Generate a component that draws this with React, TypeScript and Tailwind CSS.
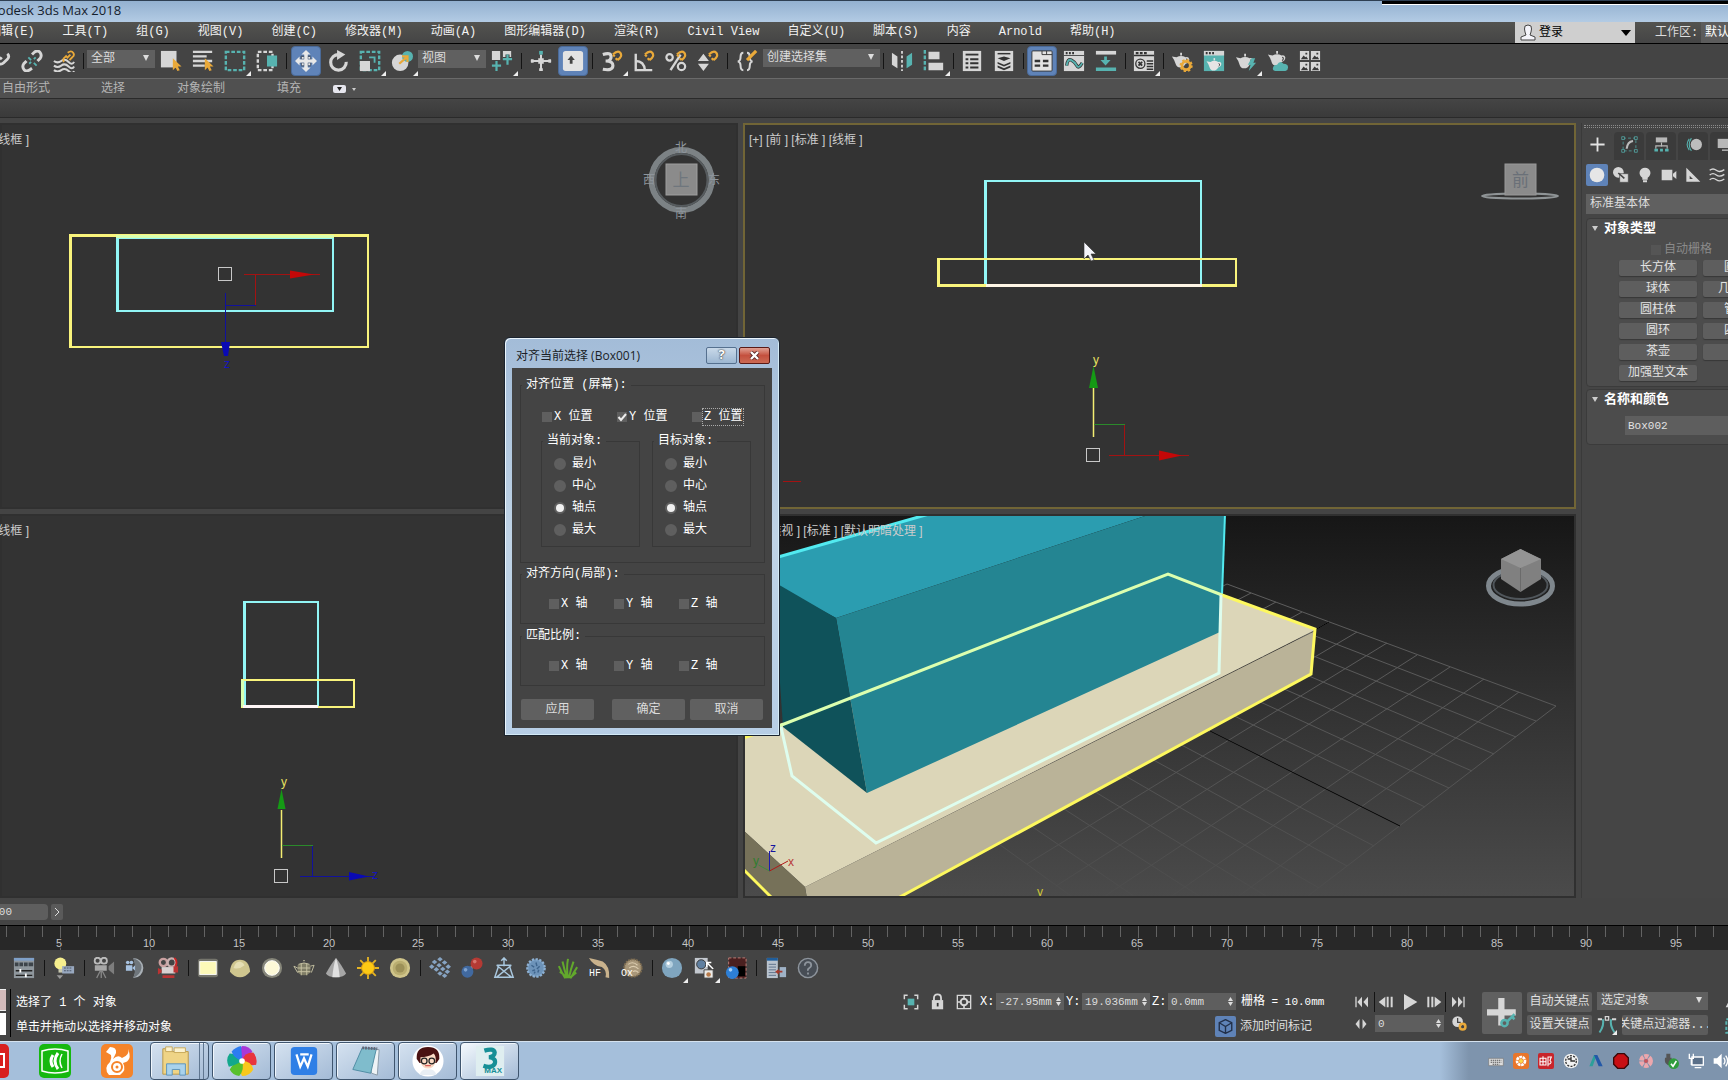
import type { ReactNode } from 'react';

const L = '#d6d6d6';
const T = '#57b3b0';
const A = '#e9a93a';

/* ---------- small shared pieces ---------- */

function Glyph({ children, size = 24 }: { children: ReactNode; size?: number }) {
  return (
    <svg width={size} height={size} viewBox="0 0 24 24" fill="none" aria-hidden="true" className="shrink-0">
      {children}
    </svg>
  );
}

function Sep({ tone = 'w-[7px]' }: { tone?: string }) {
  return (
    <div className={`flex h-full shrink-0 items-center justify-center ${tone}`}>
      <div className="h-4 w-px bg-[#141414]" />
    </div>
  );
}

interface ToolProps {
  label: string;
  active?: boolean;
  flyout?: boolean;
  children: ReactNode;
}

function Tool({ label, active, flyout, children }: ToolProps) {
  return (
    <button type="button" aria-label={label} className="relative flex h-[30px] w-8 shrink-0 items-center justify-center">
      <span
        className={`flex h-[30px] w-[30px] items-center justify-center rounded-sm ${
          active ? 'border border-[#4a6a98] bg-[#5f83b8]' : ''
        }`}
      >
        {children}
      </span>
      {flyout && (
        <svg width="5" height="5" viewBox="0 0 5 5" className="absolute right-0 bottom-0" aria-hidden="true">
          <path d="M5 0V5H0Z" fill="#eee" />
        </svg>
      )}
    </button>
  );
}

function Dropdown({ label, value, className }: { label: string; value: string; className: string }) {
  return (
    <div className={`relative shrink-0 ${className}`}>
      <select
        aria-label={label}
        className="h-full w-full appearance-none rounded-none bg-[#606060] pl-1 text-xs text-[#dcdcdc] outline-none"
      >
        <option>{value}</option>
      </select>
      <svg width="6" height="6" viewBox="0 0 6 6" className="pointer-events-none absolute top-1/2 right-1.5 -mt-1" aria-hidden="true">
        <path d="M0 0H6L3 6Z" fill="#ddd" />
      </svg>
    </div>
  );
}

/* ---------- drawings reused by several icons ---------- */

const Magnet = () => (
  <path d="M13 5q5-5 8-2q3 4-3 8M13 5l2 2M18 11l-2-2" stroke={A} strokeWidth="2.4" />
);

const Pot = ({ fill = L }: { fill?: string }) => (
  <>
    <path d="M1 5l5 1q5-3 10 0q3-1 4 2q0 4-4 5q-2 4-6 4T5 13Q4 9 1 5Z" fill={fill} />
    <path d="M10 1h2v3h-2z" fill={fill} />
    <path d="M16.500 8q2 0 1 2.500l-1 1" stroke="#444" strokeWidth="1.200" />
  </>
);

const Pointer = () => <path d="M14 9v13l3-3 2 4 2.500-1-2-4h4Z" fill={A} />;

const icons: Record<string, ReactNode> = {
  link: (
    <path d="M4 20q-3-3 0-6l4-4q3-3 6 0M20 4q3 3 0 6l-4 4q-3 3-6 0" stroke={L} strokeWidth="3" />
  ),
  unlink: (
    <>
      <path d="M12 20l-3 2q-4 2-6-1t0-6l3-3M12 5l3-3q4-2 6 1t0 6l-3 3" stroke={L} strokeWidth="3.200" />
      <path d="M8 8l3 3M14 14l3 3M9 15l2-2M14 10l2-2" stroke={T} strokeWidth="2" />
    </>
  ),
  bind: (
    <>
      <path d="M1 12q4 3 8 0t8 1 6 0M1 17q4 3 8 0t8 1 6 0M1 22q4 3 8 0t8 1 6 0" stroke={L} strokeWidth="2.200" />
      <path d="M12 13q-2-3 1-5l2-2M16 3q4-3 6 0t-1 5l-3 3M15 9l4-4" stroke={A} strokeWidth="2" />
    </>
  ),
  select: (
    <>
      <path d="M1 1h17v18H1z" fill={L} />
      <Pointer />
    </>
  ),
  byName: (
    <>
      <path d="M1 2h21M1 7h15M1 12h21M1 17h13" stroke={L} strokeWidth="2.600" />
      <Pointer />
    </>
  ),
  region: <rect x="2" y="2" width="20" height="20" stroke={T} strokeWidth="2.600" strokeDasharray="4 2" />,
  window: (
    <>
      <rect x="2" y="2" width="16" height="20" stroke={L} strokeWidth="2.600" strokeDasharray="4 2" />
      <path d="M12 6h11v12H12z" fill={T} />
    </>
  ),
  move: (
    <>
      <path d="M12 0l5 5h-3v5h5V7l5 5-5 5v-3h-5v5h3l-5 5-5-5h3v-5H5v3l-5-5 5-5v3h5V5H7Z" fill="#e8e8e8" />
      <path d="M7 6h3v4H6V7zM14 6h3v1l1 3h-4zM6 14h4v4H7zM14 14h4l-1 4h-3z" fill="#4b5a70" />
      <path d="M7.500 7.500h2v2h-2zM14.500 7.500h2v2h-2zM7.500 14.500h2v2h-2zM14.500 14.500h2v2h-2z" fill="#e8e8e8" />
    </>
  ),
  rotate: (
    <>
      <path d="M13 5A8.500 8.500 0 1 0 21 13" stroke={L} strokeWidth="3.400" />
      <path d="M11 0l9 5-9 6Z" fill={L} />
    </>
  ),
  scale: (
    <>
      <rect x="2" y="2" width="20" height="20" stroke={T} strokeWidth="2.600" strokeDasharray="4 2" />
      <path d="M11 8h6v6" stroke={T} strokeWidth="2" />
      <path d="M1 12h11v11H1z" fill={L} />
    </>
  ),
  place: (
    <>
      <circle cx="10" cy="14" r="9" fill={L} />
      <circle cx="18" cy="7" r="6" fill={T} />
      <path d="M9 15L17 8M12 7h6v6" stroke={A} strokeWidth="2.400" />
    </>
  ),
  pivot: (
    <>
      <path d="M1 1h9v10H1zM13 1h9v10h-9z" fill={L} />
      <path d="M6 11v12M1 17h10M18 5v11M13 10h10" stroke="#444" strokeWidth="4.500" />
      <path d="M6 12v11M1 17h10M18 5v11M13 10h10" stroke={T} strokeWidth="2.400" />
    </>
  ),
  manip: (
    <>
      <path d="M12 5v18M1 12h22" stroke={L} strokeWidth="2.200" />
      <path d="M10 1h4v4h-4z" fill={T} />
      <path d="M9 9h6v6H9zM1 10h3v4H1zM20 10h3v4h-3zM10 20h4v3h-4z" fill={L} />
    </>
  ),
  keyboard: (
    <>
      <rect x="1" y="1" width="22" height="22" rx="3" fill="#e3e3e3" />
      <path d="M10 6l-4 5h2.500v4h3v-4H14Z" fill="#444" />
    </>
  ),
  snap3: (
    <>
      <path d="M2 5q9-3 9 2.500Q11 12 5 12q8 0 8 5 0 6-11 4" stroke={L} strokeWidth="3.400" />
      <Magnet />
    </>
  ),
  snapAngle: (
    <>
      <path d="M3 4v18h18M3 12q9 0 10 10" stroke={L} strokeWidth="2.600" />
      <Magnet />
    </>
  ),
  snapPercent: (
    <>
      <circle cx="5" cy="8" r="3.500" stroke={L} strokeWidth="2.400" />
      <circle cx="18" cy="18" r="4" stroke={L} strokeWidth="2.400" />
      <path d="M17 5L6 22" stroke={L} strokeWidth="2.600" />
      <Magnet />
    </>
  ),
  snapSpinner: (
    <>
      <path d="M1 12l6-8 6 8zM1 15h12l-6 8z" fill={L} />
      <Magnet />
    </>
  ),
  braces: (
    <>
      <path d="M8 3Q5 3 5 7q0 5-3 5.500 3 .5 3 5Q5 22 8 22M12 3q3 0 3 4 0 5 3 5.500-3 .5-3 5 0 4.500-3 4.500" stroke={L} strokeWidth="2.200" />
      <path d="M12 11L22 1" stroke={A} strokeWidth="3.500" />
    </>
  ),
  mirror: (
    <>
      <path d="M1 3l6 4v13l-6-4z" fill={L} />
      <path d="M12 1v22" stroke={L} strokeWidth="2" strokeDasharray="3 2" />
      <path d="M23 3l-6 4v13l6-4z" fill={T} />
    </>
  ),
  align: (
    <>
      <path d="M2 0v24" stroke={T} strokeWidth="2.600" strokeDasharray="4 2" />
      <path d="M6 2h12v8H6zM6 14h16v8H6z" fill={L} />
    </>
  ),
  explorer: (
    <>
      <path d="M2 1h20v22H2z" fill={L} />
      <path d="M5 5h14" stroke="#333" strokeWidth="2" />
      <path d="M5 10h3M10 10h9M5 14.500h3M10 14.500h9M5 19h3M10 19h9" stroke="#333" strokeWidth="2.200" />
    </>
  ),
  layers: (
    <>
      <path d="M2 1h20v22H2z" fill={L} />
      <path d="M5 4h14" stroke="#333" strokeWidth="1.600" />
      <path d="M5 9l7-2 7 2-7 3zM5 13l7 3 7-3v2l-7 3-7-3zM5 17l7 3 7-3v2l-7 3-7-3z" fill="#333" />
    </>
  ),
  ribbon: (
    <>
      <rect x="1" y="1" width="22" height="22" rx="1" fill="#e3e3e3" stroke="#333" />
      <path d="M12 1v4h11M17 1v4" stroke="#333" />
      <path d="M4 12h6M13 12h6M4 17h6M13 17h6" stroke="#333" strokeWidth="2.600" />
    </>
  ),
  curve: (
    <>
      <path d="M1 1h22v22H1z" fill={L} />
      <path d="M3 3.500h9" stroke="#333" strokeWidth="2.500" strokeDasharray="2 1.500" />
      <path d="M1 6h22" stroke="#444" />
      <path d="M4 17q1-8 5-6t6 6 6-3" stroke="#333" strokeWidth="3.600" />
      <path d="M4 17q1-8 5-6t6 6 6-3" stroke={T} strokeWidth="2" />
    </>
  ),
  schematic: (
    <>
      <path d="M1 1h22v4H1z" fill={L} />
      <path d="M1 19h22v4H1zM10 7h3v4h4l-5.500 6L6 11h4z" fill={T} />
    </>
  ),
  material: (
    <>
      <path d="M1 1h22v22H1z" fill={L} />
      <path d="M3 3.500h12" stroke="#333" strokeWidth="2.500" strokeDasharray="3 1.500" />
      <path d="M1 6h22M15 12h7M15 15h7M15 18h7M15 21h7" stroke="#333" strokeWidth="1.400" />
      <circle cx="8" cy="15" r="5" stroke="#333" strokeWidth="1.400" />
      <path d="M6 13l4 4M10 13l-4 4" stroke="#333" strokeWidth="2" />
    </>
  ),
  renderSetup: (
    <>
      <g transform="translate(0 2)"><Pot /></g>
      <circle cx="16.500" cy="17" r="4.500" stroke={A} strokeWidth="3" />
      <circle cx="16.500" cy="17" r="6.300" stroke={A} strokeWidth="1.800" strokeDasharray="2.600 2.300" />
    </>
  ),
  renderFrame: (
    <>
      <path d="M1 1h22v22H1z" fill={T} />
      <path d="M1 1h22v5H1z" fill={L} />
      <path d="M3 3.500h9" stroke="#333" strokeWidth="2.500" strokeDasharray="2 1.500" />
      <g transform="translate(3 8) scale(.85)"><Pot fill="#e5e5e5" /></g>
    </>
  ),
  render: (
    <>
      <g transform="translate(0 3)"><Pot /></g>
      <path d="M18 9l4 0-2 5h3l-8 9 2-7h-3z" fill={T} />
    </>
  ),
  cloud: (
    <>
      <Pot />
      <path d="M9 23q-4-1-2-5 1-2 4-2 3-5 7-1 5 0 5 4 0 3-3 4z" fill={T} />
    </>
  ),
  gallery: (
    <>
      <path d="M1 1h10v10H1zM13 1h10v10H13zM1 13h10v10H1zM13 13h10v10H13z" fill={L} />
      <path d="M2 10l3-4 2 2 1-1 2 3zM14 10l3-4 2 2 1-1 2 3zM2 22l3-4 2 2 1-1 2 3zM14 22l3-4 2 2 1-1 2 3zM7 3h2v2H7zM19 3h2v2h-2zM7 15h2v2H7zM19 15h2v2h-2z" fill="#3a3a3a" />
    </>
  ),

  /* lower bar */
  sliders: (
    <>
      <path d="M1 1h22v22H1z" fill="#8f979d" />
      <path d="M1 1h22v3H1z" fill="#7fa0c8" />
      <path d="M2 6h4v4H2zM7 6h4v4H7zM12 6h4v4h-4zM17 6h5v4h-5z" fill="#3d444a" />
      <path d="M3 15h18M3 20h18" stroke="#222" strokeWidth="1.500" />
      <path d="M7 13h2v4H7zM13 18h2v4h-2z" fill="#fff" />
    </>
  ),
  bulb: (
    <>
      <circle cx="8" cy="7" r="6.500" fill="#f6ee8e" />
      <path d="M6 13h5v4H6z" fill="#c9c9b0" />
      <path d="M10 10h13v8H10z" fill="#98a8bf" />
      <path d="M12 12h9M12 15h9" stroke="#4b5668" strokeWidth="1.300" strokeDasharray="2 1" />
      <path d="M4 20h7l-3.500 4z" fill="#9a9a9a" />
    </>
  ),
  camera: (
    <>
      <circle cx="5" cy="4" r="3.200" stroke="#bbb" strokeWidth="2" />
      <circle cx="12" cy="4" r="3.200" stroke="#bbb" strokeWidth="2" />
      <path d="M2 9h13v6H2z" fill="#a7a7a7" />
      <path d="M17 10l6-5v14l-6-5z" fill="#7d7d7d" />
      <path d="M8 15l-4 8M9 15v8M10 15l4 8" stroke="#888" strokeWidth="1.400" />
    </>
  ),
  cameraDome: (
    <>
      <path d="M9 1a11 11 0 0 1 0 22q5-10 0-22z" fill="#a9b0b6" />
      <path d="M9 1q10 4 9 11T9 23q4-11 0-22z" fill="#6f767c" />
      <path d="M1 9h7v6H1zM8 12l3-3v6z" fill="#a8c3e2" />
      <circle cx="3" cy="6" r="2" fill="#a8c3e2" />
      <circle cx="7" cy="6" r="2" fill="#a8c3e2" />
    </>
  ),
  cameraRed: (
    <>
      <circle cx="7" cy="6" r="4" stroke="#c9a0a0" strokeWidth="2.600" />
      <circle cx="16" cy="6" r="4.500" stroke="#c9b0b0" strokeWidth="2.600" />
      <path d="M19 1q4 4 1 9" stroke="#c22" strokeWidth="2" />
      <path d="M5 11h15v7H5z" fill="#d8d0d0" />
      <path d="M1 12l4 2v3l-4 2zM18 10h5v7h-5zM6 20h13v3H6z" fill="#b33" />
    </>
  ),
  areaLight: (
    <>
      <rect x="1" y="2" width="22" height="20" rx="3" fill="#75756c" />
      <rect x="3" y="5" width="18" height="14" fill="#fdf9b8" stroke="#fff" />
    </>
  ),
  domeLight: (
    <>
      <path d="M1 16Q2 3 12 3t11 13q-5 6-11 6T1 16z" fill="#cfc68f" />
      <path d="M5 12q2-7 7-7 4 1 5 4-6 5-12 3z" fill="#e5dfb4" />
    </>
  ),
  sphereLight: (
    <>
      <circle cx="12" cy="12" r="11" fill="#86867a" />
      <circle cx="12" cy="12" r="8" fill="#fdf9d8" stroke="#fff" />
    </>
  ),
  meshLight: (
    <>
      <path d="M5 9q7-5 14 0v8q-3 3-7 3t-7-3z" fill="#7f7d66" />
      <path d="M5 12l-4-2 4 7M19 10l4-1-3 8M6 8q6-3 12 0M5 12h14M5 16h14M9 7v13M15 7v13M11 4h2" stroke="#c9c5a5" />
    </>
  ),
  iesLight: (
    <>
      <path d="M12 1q5 6 11 17-2 4-11 4T1 18Q7 7 12 1z" fill="#a5a5a5" />
      <path d="M12 1q3 8 4 21H8Q9 9 12 1z" fill="#e0e0e0" />
    </>
  ),
  sun: (
    <>
      <path d="M12 0v24M0 12h24M3.500 3.500l17 17M20.500 3.500l-17 17" stroke="#e6b524" strokeWidth="2" />
      <circle cx="12" cy="12" r="7" fill="#fdc914" stroke="#d99a10" />
    </>
  ),
  ambient: (
    <>
      <circle cx="12" cy="12" r="11" fill="#cfc48a" />
      <circle cx="12" cy="12" r="8" fill="#b9ad70" />
      <circle cx="12" cy="12" r="5" fill="#9c9058" />
    </>
  ),
  instancer: (
    <g fill="#86a3c2">
      <path d="M12 0l3 2.500-3 2.500-3-2.500zM6 3l3 2.500-3 2.500-3-2.500zM17 3.500l3 2.500-3 2.500-3-2.500zM11 6.500l3 2.500-3 2.500-3-2.500zM3 8l3 2.500-3 2.500-3-2.500zM21 8l3 2.500-3 2.500-3-2.500zM15 10.500l3 2.500-3 2.500-3-2.500zM8 11l3 2.500-3 2.500-3-2.500zM20 13.500l3 2.500-3 2.500-3-2.500zM12 15.500l3 2.500-3 2.500-3-2.500zM17 18l3 2.500-3 2.500-3-2.500z" />
    </g>
  ),
  molecule: (
    <>
      <path d="M8 15l9-9" stroke="#999" strokeWidth="3" />
      <circle cx="17" cy="7" r="6.500" fill="#b43a34" />
      <circle cx="7" cy="16" r="6.500" fill="#41699f" />
      <circle cx="15" cy="5" r="2" fill="#d6766e" />
      <circle cx="5" cy="14" r="2" fill="#7fa3cf" />
    </>
  ),
  tower: (
    <path d="M12 1v9M9 4l3-3 3 3M4 9h16M6 10L2 22h20L18 10M4 9l16 13M20 9L4 22" stroke="#a9c7de" strokeWidth="1.600" />
  ),
  fur: (
    <>
      <circle cx="12" cy="12" r="9.500" fill="#6d93b9" stroke="#8db0d2" strokeWidth="2.500" strokeDasharray="2.500 1.500" />
      <path d="M7 9l3 2M12 6l1 4M16 10l-3 3M8 15l3-1M14 17l1-3M10 18l1-2" stroke="#3f658d" strokeWidth="1.600" />
    </>
  ),
  grass: (
    <path d="M12 23Q10 12 12 2M11 23Q8 14 6 5M13 23q2-10 5-18M9 23Q5 17 2 10M15 23q3-6 7-12M10 23Q8 19 3 16M14 23l7-6" stroke="#62a82c" strokeWidth="2.200" />
  ),
  hair: <path d="M0 1q9 2 15 4 8 5 7 18l-4-1q2-7-4-11Q4 9 0 1z" fill="#c9b28c" />,
  ornatrix: (
    <>
      <circle cx="13" cy="12" r="9.500" fill="#a8977a" stroke="#7f6e52" strokeWidth="2" strokeDasharray="2 1" />
      <path d="M8 8q5-4 10 1M9 12q5-4 10 1M13 16q3-2 6 1" stroke="#dccdb0" strokeWidth="1.200" />
    </>
  ),
  ball: (
    <>
      <circle cx="12" cy="12" r="11" fill="#7fa5bf" />
      <circle cx="9" cy="8" r="4" fill="#b5cfdf" />
      <circle cx="8" cy="7" r="1.600" fill="#fff" />
    </>
  ),
  convert: (
    <>
      <path d="M2 1h14v17H2z" fill="#c3c8cf" />
      <circle cx="9" cy="8" r="5" fill="#5f7fa0" stroke="#333" />
      <path d="M15 6l7 7M15 11V6h5" stroke="#fff" strokeWidth="1.600" />
      <path d="M12 14h10v9H12z" fill="#ecebe8" stroke="#444" />
      <circle cx="17" cy="19" r="2.500" fill="#b87a4a" />
    </>
  ),
  bucket: (
    <>
      <path d="M4 1h19v22H4z" fill="#4a2020" stroke="#c58078" strokeDasharray="3 2" />
      <path d="M14 10h8v11h-8z" fill="#000" />
      <circle cx="8" cy="17" r="7" fill="#2d7fd6" />
      <circle cx="6" cy="14" r="2" fill="#a9d2f8" />
    </>
  ),
  script: (
    <>
      <path d="M2 1h12v22H2z" fill="#b9c3ce" />
      <path d="M2 1h12v3H2z" fill="#1f5d9a" />
      <path d="M4 8h8M4 11h8M4 14h8M4 17h8M4 20h8" stroke="#5a6f88" />
      <path d="M16 11h7v11h-7z" fill="#9fb2c6" />
      <path d="M11 16l4-3v2h4v2h-4v2z" fill="#a33a2c" />
    </>
  ),
  help: (
    <>
      <circle cx="12" cy="12" r="10.500" fill="#474d55" stroke="#8d949c" strokeWidth="1.600" />
      <path d="M8.500 9.500q0-4 3.500-4t3.500 3.500q0 2-2 3t-1.500 3M12 17v2" stroke="#8d949c" strokeWidth="2" />
    </>
  ),
};

/* [name, label, flags] groups for both icon bars; "|" draws a divider */
type Item = [string, string, string?] | '|';

const lowerBar: Item[] = [
  ['sliders', '渲染设置'], '|',
  ['bulb', '灯光列表'], '|',
  ['camera', '相机'], ['cameraDome', '穹顶相机'], ['cameraRed', '物理相机'], '|',
  ['areaLight', '面光'], ['domeLight', '穹顶光'], ['sphereLight', '球光'], ['meshLight', '网格光'],
  ['iesLight', 'IES'], ['sun', '太阳'], ['ambient', '环境光'], '|',
  ['instancer', '实例'], ['molecule', '粒子'], ['tower', '代理'], ['fur', '毛发'], ['grass', '草'],
  ['hair', 'HF'], ['ornatrix', 'Ox'], '|',
  ['ball', '材质', 'f'], ['convert', '转换', 'f'], ['bucket', '区域'], '|',
  ['script', '脚本'], ['help', '帮助'],
];

function Bar({ items, divider }: { items: Item[]; divider?: string }) {
  return (
    <>
      {items.map((item, i) =>
        item === '|' ? (
          <Sep key={i} tone={divider} />
        ) : (
          <Tool key={i} label={item[1]} active={item[2] === 'a'} flyout={item[2] === 'f'}>
            <span className="relative">
              <Glyph size={22}>{icons[item[0]]}</Glyph>
              {(item[1] === 'HF' || item[1] === 'Ox') && (
                <span className="absolute bottom-0 left-0 text-[10px] leading-none text-white">{item[1]}</span>
              )}
            </span>
          </Tool>
        ),
      )}
    </>
  );
}

/* ---------- top of window ---------- */

const menus = [
  '编辑(E)', '工具(T)', '组(G)', '视图(V)', '创建(C)', '修改器(M)', '动画(A)', '图形编辑器(D)',
  '渲染(R)', 'Civil View', '自定义(U)', '脚本(S)', '内容', 'Arnold', '帮助(H)',
];

function MenuBar() {
  return (
    <div className="flex h-[22px] shrink-0 justify-between border-b border-black bg-linear-to-b from-[#535350] to-[#454545]">
      <nav className="-ml-[11px] flex gap-7 text-[#f2f2f2]">
        {menus.map((m) => (
          <button key={m} type="button" className="h-5 shrink-0 whitespace-nowrap">
            {m}
          </button>
        ))}
      </nav>
      <div className="flex w-[213px] shrink-0 items-stretch overflow-hidden">
        <button type="button" className="flex w-[120px] shrink-0 items-center bg-[#cfcfcf] pr-1 pl-1 text-black">
          <svg width="18" height="18" viewBox="0 0 18 18" className="mr-0.5" aria-hidden="true">
            <path d="M6 2Q9 0 12 2q1 3 0 6l-1 3 5 2v3H2v-3l5-2-1-3q-1-3 0-6z" fill="#f4f4fa" stroke="#444" />
          </svg>
          登录
          <svg width="10" height="6" viewBox="0 0 10 6" className="ml-auto" aria-hidden="true">
            <path d="M0 0H10L5 6Z" fill="#000" />
          </svg>
        </button>
        <span className="w-[46px] shrink-0 pl-5 leading-[22px] whitespace-nowrap text-[#ddd]">工作区:</span>
        <select aria-label="工作区" className="ml-5 w-20 shrink-0 appearance-none bg-[#5c5c5c] pl-1 text-white">
          <option>默认</option>
        </select>
      </div>
    </div>
  );
}

function MainToolbar() {
  return (
    <div className="flex h-[34px] shrink-0 items-center overflow-hidden bg-[#444]">
      <div className="-ml-4 flex h-full items-center">
        <Bar items={[['link', '链接'], ['unlink', '取消链接'], ['bind', '绑定'], '|']} />
        <Dropdown label="选择过滤器" value="全部" className="mb-1 h-[18px] w-[68px]" />
        <Bar
          items={[
            ['select', '选择对象'], ['byName', '按名称选择'], ['region', '矩形区域', 'f'], ['window', '窗口/交叉'], '|',
            ['move', '移动', 'a'], ['rotate', '旋转'], ['scale', '缩放', 'f'], ['place', '放置', 'f'],
          ]}
        />
        <Dropdown label="参考坐标系" value="视图" className="mb-1 h-[18px] w-[68px]" />
        <Bar
          items={[
            ['pivot', '轴点中心', 'f'], '|', ['manip', '操纵'], ['keyboard', '快捷键覆盖', 'a'], '|',
            ['snap3', '捕捉', 'f'], ['snapAngle', '角度捕捉'], ['snapPercent', '百分比捕捉'], ['snapSpinner', '微调器捕捉'], '|',
            ['braces', '命名选择集'],
          ]}
        />
        <Dropdown label="命名选择集" value="创建选择集" className="mb-1.5 h-[18px] w-[117px]" />
        <Bar
          divider="w-1.5"
          items={[
            '|', ['mirror', '镜像'], ['align', '对齐', 'f'], '|', ['explorer', '场景资源管理器'], ['layers', '层'], '|',
            ['ribbon', '功能区', 'a'], ['curve', '曲线编辑器'], ['schematic', '图解视图'], '|',
            ['material', '材质编辑器', 'f'], '|', ['renderSetup', '渲染设置'], ['renderFrame', '渲染帧窗口'],
            ['render', '渲染', 'f'], ['cloud', '云渲染'], ['gallery', '图库'],
          ]}
        />
      </div>
    </div>
  );
}

function Ribbon() {
  return (
    <>
      <div className="flex h-5 shrink-0 items-end border-t border-[#6a6a6a] bg-[#505050] pl-0.5 leading-[18px] text-[#b4b4b4]">
        <button type="button" className="mr-[51px]">自由形式</button>
        <button type="button" className="mr-[52px]">选择</button>
        <button type="button" className="mr-[52px]">对象绘制</button>
        <button type="button" className="mr-8">填充</button>
        <button type="button" aria-label="展开" className="flex h-[18px] items-center">
          <svg width="24" height="9" viewBox="0 0 24 9" aria-hidden="true">
            <rect width="13" height="8" rx="2" fill="#e6e6ee" />
            <path d="M4 2h5L6.500 6z" fill="#222" />
            <path d="M19 3h4l-2 3z" fill="#ccc" />
          </svg>
        </button>
      </div>
      <div className="h-5 shrink-0 border-y border-[#2a2a2a] bg-linear-to-b from-[#454545] to-[#3a3a3a]" />
    </>
  );
}

/* ---------- viewports ---------- */

function Viewport({ label, labelClass = 'left-1.5', active, children }: {
  label: string;
  labelClass?: string;
  active?: boolean;
  children: ReactNode;
}) {
  return (
    <section
      className={`relative min-h-0 min-w-0 overflow-hidden bg-[#333] outline-2 -outline-offset-2 ${
        active ? 'outline-[#716536]' : 'outline-[#303030]'
      }`}
    >
      <svg className="block h-full w-full" aria-hidden="true">{children}</svg>
      <span className={`absolute top-[9px] [font-family:'Liberation_Sans','Noto_Sans_CJK_SC',sans-serif] whitespace-nowrap text-[#ccc] ${labelClass}`}>
        {label}
      </span>
    </section>
  );
}

function GizmoLetter({ x, y, fill, children }: { x: number; y: number; fill: string; children: string }) {
  return (
    <text x={x} y={y} fill={fill} fontSize="12" fontFamily="Liberation Sans, sans-serif">
      {children}
    </text>
  );
}

function TopView() {
  return (
    <Viewport label="[+] [上 ] [标准 ] [线框 ]" labelClass="right-full -mr-[29px]">
      <rect x="70" y="112" width="298" height="112" fill="none" stroke="#f9f47c" strokeWidth="2" />
      <path d="M70.500 111v114M69 112.500h300" stroke="#f9f47c" strokeWidth="3" />
      <rect x="117" y="115" width="216" height="73" fill="none" stroke="#92f6f6" strokeWidth="2" />
      <path d="M117.500 114v75" stroke="#92f6f6" strokeWidth="3" />
      <path d="M116 113.500h218" stroke="#d9ffb0" strokeWidth="3" />
      <rect x="218.500" y="144.500" width="13" height="13" fill="none" stroke="#c8c8c8" />
      <path d="M244 151.500h76M255.500 151v31" stroke="#a31212" fill="none" />
      <path d="M290 147.500l24 4-24 4z" fill="#c40808" />
      <path d="M225.500 170v50M225 182.500h31" stroke="#11119c" />
      <path d="M221 219h9l-2 14h-4z" fill="#0a0ab4" />
      <GizmoLetter x={224} y={245} fill="#1414c0">z</GizmoLetter>
      <circle cx="681.500" cy="57" r="30" fill="none" stroke="#7c8285" strokeWidth="6" />
      <circle cx="681.500" cy="57" r="26" fill="none" stroke="#575c5f" strokeWidth="2" />
      <rect x="666" y="41" width="31" height="31" fill="#8b8b8b" stroke="#9e9e9e" />
      <g fontSize="12" fill="#8e959c" textAnchor="middle" fontFamily="Noto Sans CJK SC, sans-serif">
        <text x="681" y="29">北</text>
        <text x="681" y="95">南</text>
        <text x="649" y="61">西</text>
        <text x="714" y="61">东</text>
        <text x="681" y="63" fontSize="17" fill="#6f767d">上</text>
      </g>
    </Viewport>
  );
}

function FrontView() {
  return (
    <Viewport label="[+]  [前 ]  [标准 ]  [线框 ]" labelClass="left-1.5 [word-spacing:normal]" active>
      <rect x="242" y="58" width="216" height="104" fill="none" stroke="#92f6f6" strokeWidth="2" />
      <path d="M242.500 57v106" stroke="#92f6f6" strokeWidth="3" />
      <rect x="195" y="136" width="298" height="27" fill="none" stroke="#f9f47c" strokeWidth="2" />
      <path d="M195.500 135v29M194 162.500h300" stroke="#f9f47c" strokeWidth="3" />
      <path d="M243 162.500h216" stroke="#fff6e6" strokeWidth="3" />
      <path d="M350.500 265v49" stroke="#f4ee72" strokeWidth="1.500" />
      <path d="M350.500 243l4.500 22h-9z" fill="#159a15" />
      <GizmoLetter x={350} y={241} fill="#e8e060">y</GizmoLetter>
      <path d="M351 301.500h31" stroke="#2b8a2b" />
      <path d="M381.500 302v31M366 332.500h80M40 358.500h18" stroke="#a31212" />
      <path d="M416 327.500l23 5-23 5z" fill="#c40808" />
      <rect x="343.500" y="325.500" width="13" height="13" fill="none" stroke="#c8c8c8" />
      <path d="M341 119v17l4-4 3 6 3-1-3-6h5z" fill="#f4f4fa" stroke="#333" strokeWidth=".6" />
      <ellipse cx="777" cy="73" rx="38" ry="2.500" fill="none" stroke="#8f9496" strokeWidth="2" />
      <rect x="762" y="41" width="31" height="31" fill="#8b8b8b" stroke="#999" />
      <text x="777.500" y="63" fontSize="17" fill="#6a7078" textAnchor="middle" fontFamily="Noto Sans CJK SC, sans-serif">前</text>
    </Viewport>
  );
}

function LeftView() {
  return (
    <Viewport label="[+] [左 ] [标准 ] [线框 ]" labelClass="right-full -mr-[29px]">
      <rect x="244" y="88" width="74" height="104" fill="none" stroke="#92f6f6" strokeWidth="2" />
      <path d="M244.500 87v106" stroke="#92f6f6" strokeWidth="3" />
      <rect x="242" y="166" width="112" height="27" fill="none" stroke="#f9f47c" strokeWidth="2" />
      <path d="M242.500 166v27" stroke="#d9ffb0" strokeWidth="3" />
      <path d="M243 192.500h75" stroke="#fff6f6" strokeWidth="3" />
      <path d="M281.500 296v48" stroke="#f4ee72" strokeWidth="1.500" />
      <path d="M281.500 275l4 20h-8z" fill="#159a15" />
      <GizmoLetter x={281} y={272} fill="#e8e060">y</GizmoLetter>
      <path d="M282 331.500h31" stroke="#2b8a2b" />
      <path d="M312.500 332v31M300 362.500h74" stroke="#11119c" />
      <path d="M349 358l20 4.500-20 4z" fill="#0a0ab4" />
      <GizmoLetter x={372} y={365} fill="#1414c0">z</GizmoLetter>
      <rect x="274.500" y="355.500" width="13" height="13" fill="none" stroke="#c8c8c8" />
    </Viewport>
  );
}

// Ground grid: projective map of grid cells (u, v) to viewport pixels.
function project(u: number, v: number): [number, number] {
  const s = u / 7;
  const t = v / 7;
  const g = 0.1746;
  const h = -0.1227;
  const w = g * s + h * t + 1;
  const x = ((585.7 * (1 + g) - 813.3) * s + (656.9 * (1 + h) - 813.3) * t + 813.3) / w;
  const y = ((107.7 * (1 + g) - 192) * s + (311.7 * (1 + h) - 192) * t + 192) / w;
  return [Math.round(x), Math.round(y)];
}

function gridPath() {
  let d = '';
  for (let i = 0; i <= 14; i++) {
    d += `M${project(i, 0)}L${project(i, 14)}M${project(0, i)}L${project(11, i)}`;
  }
  return d;
}

function PerspectiveView() {
  return (
    <Viewport label="[+] [透视 ] [标准 ] [默认明暗处理 ]">
      <defs>
        <linearGradient id="sky" x1="0" y1="0" x2="0" y2="1">
          <stop offset="0" stopColor="#161616" />
          <stop offset=".5" stopColor="#323232" />
          <stop offset="1" stopColor="#4b4b4b" />
        </linearGradient>
        <linearGradient id="grid" gradientUnits="userSpaceOnUse" x1="0" y1="70" x2="0" y2="383">
          <stop offset="0" stopColor="#5e5e5e" />
          <stop offset=".5" stopColor="#565656" />
          <stop offset="1" stopColor="#4c4c4c" />
        </linearGradient>
      </defs>
      <rect width="100%" height="100%" fill="url(#sky)" />
      <path d={gridPath()} stroke="url(#grid)" />
      <path d="M467 217L657 312M572 116l14-8" stroke="#000" />
      <path d="M0 224L425 60l147 56L62 373 0 316z" fill="#dcd6b8" />
      <path d="M62 373L572 117l-3 43-413 224H64z" fill="#bab398" />
      <path d="M0 316l62 57 2 12H30L0 355z" fill="#767159" />
      <path d="M0 54L186 0h222L93 104z" fill="#2b9db0" />
      <path d="M93 104L408 0h74l-3 81-2 37-353 161z" fill="#248592" />
      <path d="M30 68l8 4 55 32 31 175-84-66z" fill="#0f525a" />
      <path d="M0 53L186 0" stroke="#52eaf0" strokeWidth="3" />
      <path d="M482 0l-3 81" stroke="#52eaf0" strokeWidth="2" />
      <path d="M36 212L425 60l54 21" stroke="#dcffaf" strokeWidth="3" fill="none" />
      <path d="M479 81l93 34-4 45-413 224M0 224l30-10M0 355l29 29" stroke="#fdf85e" strokeWidth="3" fill="none" />
      <path d="M38 213l11 49 84 67 343-170 2-78" stroke="#defdee" strokeWidth="3" fill="none" />
      <path d="M26.500 357v-20" stroke="#1b1bb0" />
      <path d="M26.500 357L45 347" stroke="#b01818" />
      <path d="M26.500 357l-11-6" stroke="#3f8a3f" />
      <GizmoLetter x={27} y={338} fill="#1414a0">z</GizmoLetter>
      <GizmoLetter x={45} y={352} fill="#b83a3a">x</GizmoLetter>
      <GizmoLetter x={10} y={351} fill="#2f7d2f">y</GizmoLetter>
      <GizmoLetter x={294} y={382} fill="#cfc638">y</GizmoLetter>
      <ellipse cx="777.500" cy="72" rx="32" ry="18" fill="none" stroke="#7f878d" strokeWidth="5" />
      <ellipse cx="777.500" cy="71" rx="27" ry="14" fill="none" stroke="#50565b" strokeWidth="2" />
      <path d="M777.500 35L798 45v20l-20.500 13L758 65V45z" fill="#808080" />
      <path d="M777.500 35L798 45l-20.500 9L758 45z" fill="#949494" />
      <path d="M777.500 54v24" stroke="#6b6b6b" />
    </Viewport>
  );
}

/* ---------- command panel ---------- */

const panelTabs: [string, ReactNode][] = [
  ['创建', <path d="M12 2v20M2 12h20" stroke="#e4e4e4" strokeWidth="2.600" />],
  ['修改', (
    <>
      <rect x="3" y="3" width="18" height="18" stroke={T} strokeDasharray="4 3" />
      <path d="M1 1h4v4H1zM19 1h4v4h-4zM1 19h4v4H1zM19 19h4v4h-4z" fill="#3c3c3c" stroke={T} />
      <path d="M8 18Q9 8 17 7" stroke="#bbb" strokeWidth="3" />
    </>
  )],
  ['层次', (
    <>
      <path d="M4 2h16v7H4z" fill="#b8b8b8" />
      <path d="M12 9v6M4 18v-4h16v4" stroke="#b8b8b8" strokeWidth="1.600" />
      <path d="M2 18h5v4H2zM10 18h4v4h-4zM17 18h5v4h-5z" fill={T} />
    </>
  )],
  ['运动', (
    <>
      <path d="M6 4q-6 8 0 16M9 3Q3 12 9 21" stroke={T} strokeWidth="1.500" />
      <circle cx="16" cy="12" r="8" fill="#bdbdbd" />
    </>
  )],
  ['显示', (
    <>
      <path d="M1 4h22v13H1z" fill="#b8b8b8" />
      <path d="M7 20h10" stroke="#b8b8b8" strokeWidth="2" />
    </>
  )],
];

const categories: [string, ReactNode][] = [
  ['几何体', <circle cx="12" cy="12" r="11" fill="#e6e6e6" />],
  ['图形', (
    <>
      <circle cx="8" cy="8" r="8" fill={L} />
      <path d="M10 10h13v13H10z" fill={L} stroke="#444" />
      <path d="M8 9l9 8" stroke="#444" strokeWidth="2.500" />
    </>
  )],
  ['灯光', <path d="M8 16Q3 12 4 7q2-6 8-6t8 6q1 5-4 9v3H8zM9 20h6v3H9z" fill={L} />],
  ['摄影机', <path d="M1 4h16v16H1zM18 10l5-4v12l-5-4z" fill={L} />],
  ['辅助对象', <path fillRule="evenodd" d="M2 1l21 21H2zM7 13v5h5z" fill={L} />],
  ['空间扭曲', <path d="M1 5q5-4 10 0t12-1M1 12q5-4 10 0t12-1M1 19q5-4 10 0t12-1" stroke={L} strokeWidth="2" />],
];

const primitives = ['长方体', '圆锥体', '球体', '几何球体', '圆柱体', '管状体', '圆环', '四棱锥', '茶壶', '平面', '加强型文本'];

function RolloutTitle({ children }: { children: string }) {
  return (
    <button type="button" className="flex h-5 items-center gap-1.5 pl-[5px] text-[13px] font-bold text-white">
      <svg width="6" height="6" viewBox="0 0 6 6" aria-hidden="true">
        <path d="M0 0H6L3 5Z" fill="#ccc" />
      </svg>
      {children}
    </button>
  );
}

function CommandPanel() {
  return (
    <aside className="w-[147px] shrink-0 overflow-hidden border-l border-[#3a3a3a] bg-[#454545]">
      <div className="mt-0.5 ml-0.5 h-[3px] border-y border-dotted border-[#8c8c8c]" />
      <div role="tablist" className="mt-1 flex h-7">
        {panelTabs.map(([name, art], i) => (
          <button
            key={name}
            type="button"
            role="tab"
            aria-label={name}
            aria-selected={i === 0}
            className={`mr-0.5 flex w-[30px] shrink-0 items-center justify-center rounded-t pb-1 ${i === 0 ? 'bg-[#454545]' : 'bg-[#3b3b3b]'}`}
          >
            <Glyph size={17}>{art}</Glyph>
          </button>
        ))}
      </div>
      <div className="mt-1 flex gap-0.5 pl-1">
        {categories.map(([name, art], i) => (
          <button
            key={name}
            type="button"
            aria-label={name}
            className={`flex h-[22px] w-[22px] shrink-0 items-center justify-center rounded-xs ${i === 0 ? 'bg-[#5f83b8]' : ''}`}
          >
            <Glyph size={16}>{art}</Glyph>
          </button>
        ))}
      </div>
      <Dropdown label="子类别" value="标准基本体" className="mt-2 ml-1 h-5 w-[170px]" />
      <div className="mt-1 ml-1 h-[169px] w-[210px] rounded-sm border border-[#3b3b3b] bg-[#4c4c4c]">
        <RolloutTitle>对象类型</RolloutTitle>
        <label className="flex h-[21px] items-center gap-[3px] pl-16 text-[#8a8a8a]">
          <input type="checkbox" disabled className="h-[10px] w-[10px] appearance-none bg-[#555]" />
          自动栅格
        </label>
        <div className="ml-8 grid w-[162px] grid-cols-2 gap-x-1.5 gap-y-[5px]">
          {primitives.map((p) => (
            <button key={p} type="button" className="h-4 rounded-xs bg-[#5e5e5e] leading-4 whitespace-nowrap text-[#e2e2e2] shadow-[0_1px_1px_#383838]">
              {p}
            </button>
          ))}
        </div>
      </div>
      <div className="mt-0.5 ml-1 h-14 w-[210px] rounded-sm border border-[#3b3b3b] bg-[#4c4c4c]">
        <RolloutTitle>名称和颜色</RolloutTitle>
        <input aria-label="对象名称" defaultValue="Box002" className="mt-1.5 ml-[38px] block h-[19px] w-[140px] bg-[#5e5e5e] pl-[3px] text-[11px] text-[#e2e2e2] outline-none" />
      </div>
    </aside>
  );
}

/* ---------- align dialog ---------- */

function Check({ label, checked, focused }: { label: string; checked?: boolean; focused?: boolean }) {
  return (
    <label className="relative flex h-4 items-center text-white">
      <input
        type="checkbox"
        defaultChecked={checked}
        className="peer h-[10px] w-[10px] shrink-0 appearance-none bg-[#5f5f5f] outline-none"
      />
      <svg width="10" height="10" viewBox="0 0 10 10" fill="none" className="absolute left-0 hidden peer-checked:block" aria-hidden="true">
        <path d="M1.500 5l2.500 3L9 2" stroke="#eee" strokeWidth="2" />
      </svg>
      <span className={`ml-px px-px leading-4 whitespace-nowrap ${focused ? 'outline outline-dotted outline-[#aaa]' : ''}`}>
        {label}
      </span>
    </label>
  );
}

function Pivot({ title, name }: { title: string; name: string }) {
  return (
    <fieldset className="w-[99px] min-w-0 border border-[#383838] pt-1 pb-[5px]">
      <legend className="ml-px px-1 leading-4 text-white">{title}</legend>
      {['最小', '中心', '轴点', '最大'].map((o) => (
        <label key={o} className="flex h-[22px] items-center gap-1.5 pl-3 text-white">
          <input
            type="radio"
            name={name}
            defaultChecked={o === '轴点'}
            className="h-3 w-3 appearance-none rounded-full border-[3px] border-[#5f5f5f] bg-[#5f5f5f] checked:border-2 checked:bg-[#f0f0f0]"
          />
          {o}
        </label>
      ))}
    </fieldset>
  );
}

function AxisGroup({ title }: { title: string }) {
  return (
    <fieldset className="min-w-0 border border-[#383838] pt-3.5 pb-[11px]">
      <legend className="ml-px px-1 leading-4 text-white">{title}</legend>
      <div className="flex pl-7">
        {['X 轴', 'Y 轴', 'Z 轴'].map((a) => (
          <div key={a} className="w-[65px]">
            <Check label={a} />
          </div>
        ))}
      </div>
    </fieldset>
  );
}

function AlignDialog() {
  const action = 'h-[21px] w-[73px] rounded-xs bg-[#606060] text-[#dcdcdc]';
  return (
    <div
      role="dialog"
      aria-label="对齐当前选择"
      className="absolute top-[337px] left-[504px] w-[276px] rounded-t-md border border-[#1b2430] bg-linear-to-b from-[#a3bcd8] via-[#bfd3e6] to-[#b7cee6] px-[7px] pb-[7px] text-xs shadow-[inset_1px_1px_0_#eaf4fb,inset_-1px_-1px_0_#d4eaf5]"
    >
      <div className="flex h-[30px] items-center pr-0.5 pl-1 [font-family:'Open_Sans','Noto_Sans_CJK_SC',sans-serif] text-[#1a1f28]">
        <span className="grow pt-1.5">对齐当前选择 (Box001)</span>
        <button type="button" aria-label="帮助" className="mt-1 flex h-[17px] w-[31px] items-center justify-center rounded-xs border border-[#55708f] bg-linear-to-b from-[#c9d9e9] to-[#9db7d2] text-[13px] font-bold text-white [text-shadow:0_0_2px_#333,0_0_1px_#333]">
          ?
        </button>
        <button type="button" aria-label="关闭" className="mt-1 ml-0.5 flex h-[17px] w-[31px] items-center justify-center rounded-xs border border-[#5a1a16] bg-linear-to-b from-[#e0a094] via-[#c4503e] to-[#cb6a54]">
          <svg width="11" height="9" viewBox="0 0 11 9" aria-hidden="true">
            <path d="M2 1l7 7M9 1L2 8" stroke="#5b2a2a" strokeWidth="4" />
            <path d="M2 1l7 7M9 1L2 8" stroke="#fff" strokeWidth="2.400" />
          </svg>
        </button>
      </div>
      <div className="bg-[#444] pt-[9px] pr-[7px] pb-2 pl-2">
        <fieldset className="min-w-0 border border-[#383838] pt-4 pb-[15px]">
          <legend className="ml-px px-1 leading-4 text-white">对齐位置 (屏幕):</legend>
          <div className="flex pl-[21px]">
            <div className="w-[75px]"><Check label="X 位置" /></div>
            <div className="w-[75px]"><Check label="Y 位置" checked /></div>
            <Check label="Z 位置" focused />
          </div>
          <div className="mt-2 flex gap-3 pl-5">
            <Pivot title="当前对象:" name="current" />
            <Pivot title="目标对象:" name="target" />
          </div>
        </fieldset>
        <div className="mt-[3px] flex flex-col gap-1">
          <AxisGroup title="对齐方向(局部):" />
          <AxisGroup title="匹配比例:" />
        </div>
        <div className="mt-[13px] flex gap-[5px] pl-px">
          <button type="button" className={`mr-[13px] ${action}`}>应用</button>
          <button type="button" className={action}>确定</button>
          <button type="button" className={action}>取消</button>
        </div>
      </div>
    </div>
  );
}

/* ---------- timeline and status ---------- */

function Timeline() {
  const frames = Array.from({ length: 98 }, (_, i) => i + 1);
  const at = (f: number) => Math.round(60 + (f - 5) * 17.97);
  return (
    <>
      <div className="flex h-[27px] shrink-0 gap-0.5 pt-1.5 text-[#ddd]">
        <button type="button" className="-ml-20 h-4 w-32 rounded-sm bg-[#5e5e5e] pr-9 text-right text-[11px] leading-4 whitespace-nowrap">
          0 / 100
        </button>
        <button type="button" aria-label="下一帧" className="ml-px flex h-4 w-3 items-center justify-center rounded-xs bg-[#5a5a5a]">
          <svg width="6" height="10" viewBox="0 0 6 10" fill="none" aria-hidden="true">
            <path d="M1 1l4 4-4 4" stroke="#ddd" />
          </svg>
        </button>
      </div>
      <svg className="block h-[25px] w-full shrink-0 border-t border-black bg-[#282828]" aria-label="时间轴">
        {frames.map((f) => (
          <g key={f}>
            <path d={`M${at(f)}.5 0V${f % 5 ? 11 : 25}`} stroke="#636363" />
            {f % 5 === 0 && (
              <text x={at(f) - 1} y="21" fontSize="11" fill="#c4c4c4" stroke="#282828" strokeWidth="2" paintOrder="stroke" textAnchor="middle" fontFamily="Liberation Sans, sans-serif">
                {f}
              </text>
            )}
          </g>
        ))}
      </svg>
    </>
  );
}

function Spinner({ label, value, width }: { label: string; value: string; width: string }) {
  return (
    <span className={`relative block shrink-0 ${width}`}>
      <input aria-label={label} defaultValue={value} className="block h-[17px] w-full bg-[#5e5e5e] pl-[3px] text-[11px] text-[#dcdcdc] outline-none" />
      <svg width="5" height="9" viewBox="0 0 5 9" className="absolute top-1 right-[3px]" aria-hidden="true">
        <path d="M0 4l2.500-4L5 4zM0 5h5L2.500 9z" fill="#ddd" />
      </svg>
    </span>
  );
}

function Coordinates() {
  return (
    <div className="flex flex-col items-end gap-1.5 pt-2">
      <div className="flex h-[17px] items-center text-white">
        <button type="button" aria-label="隔离" className="mr-2.5">
          <Glyph size={16}>
            <path d="M2 8V2h5M17 2h5v6M22 16v6h-5M7 22H2v-6" stroke={L} strokeWidth="2.200" />
            <path d="M7 7h10v10H7z" fill={T} />
          </Glyph>
        </button>
        <button type="button" aria-label="锁定" className="mr-2.5">
          <Glyph size={17}>
            <path d="M7 11V7q0-5 5-5t5 5v4" stroke={L} strokeWidth="2.600" />
            <path d="M4 10h16v13H4z" fill={L} />
            <path d="M11 14h2.500v5H11z" fill="#333" />
          </Glyph>
        </button>
        <button type="button" aria-label="绝对模式" className="mr-2">
          <Glyph size={16}>
            <path d="M2 2h20v20H2z" stroke={L} strokeWidth="2" />
            <circle cx="12" cy="12" r="5" stroke={L} strokeWidth="3" />
            <path d="M12 2v5M12 17v5M2 12h5M17 12h5" stroke={L} strokeWidth="2.400" />
          </Glyph>
        </button>
        <span className="w-4">X:</span>
        <Spinner label="X" value="-27.95mm" width="w-[68px]" />
        <span className="ml-0.5 w-4">Y:</span>
        <Spinner label="Y" value="19.036mm" width="w-[68px]" />
        <span className="ml-0.5 w-4">Z:</span>
        <Spinner label="Z" value="0.0mm" width="w-[68px]" />
        <span className="ml-[5px] w-[91px] whitespace-nowrap">
          栅格<span className="text-[11px]"> = 10.0mm</span>
        </span>
      </div>
      <button type="button" className="flex h-[21px] w-[117px] items-center gap-1 text-[#ddd]">
        <span className="flex h-[21px] w-[21px] items-center justify-center rounded-xs bg-[#5f83b8]">
          <Glyph size={15}>
            <path d="M12 1l10 5v12l-10 5-10-5V6zM2 6l10 6 10-6M12 12v11" stroke="#22304a" strokeWidth="2.200" />
          </Glyph>
        </span>
        添加时间标记
      </button>
    </div>
  );
}

const playback: [string, string][] = [
  ['转至开头', 'M2 4h2v16H2zM12 4v16l-7-8zM21 4v16l-7-8z'],
  ['上一帧', 'M11 4v16L1 12zM13 4h3v16h-3zM19 4h3v16h-3z'],
  ['播放', 'M3 0l20 12L3 24z'],
  ['下一帧', 'M13 4v16l10-8zM2 4h3v16H2zM8 4h3v16H8z'],
  ['转至结尾', 'M20 4h2v16h-2zM3 4v16l7-8zM12 4v16l7-8z'],
];

function Playback() {
  return (
    <div className="w-[120px] pt-2">
      <div className="flex h-[17px] items-center justify-between">
        {playback.map(([name, d], i) => (
          <button key={name} type="button" aria-label={name} className={`flex h-5 grow items-center justify-center ${i === 0 || i === 3 ? 'border-r border-[#141414]' : ''}`}>
            <Glyph size={16}><path d={d} fill={L} /></Glyph>
          </button>
        ))}
      </div>
      <div className="mt-[5px] flex items-center gap-2">
        <button type="button" aria-label="关键点模式" className="ml-[5px]">
          <Glyph size={12}><path d="M9 2v20L1 12zM15 2v20l8-10z" fill={L} /></Glyph>
        </button>
        <Spinner label="当前帧" value="0" width="w-[69px]" />
        <button type="button" aria-label="时间配置">
          <Glyph size={15}>
            <circle cx="9" cy="9" r="8.500" fill={L} />
            <path d="M9 3v7h5" stroke="#444" strokeWidth="2" />
            <circle cx="17" cy="17" r="4.500" stroke={A} strokeWidth="4" />
          </Glyph>
        </button>
      </div>
    </div>
  );
}

function KeyControls() {
  const key = 'rounded-xs bg-[#5c5c5c] text-[#e0e0e0] whitespace-nowrap';
  return (
    <div className="flex w-[246px] shrink-0 gap-[5px] overflow-hidden pt-[7px]">
      <button type="button" aria-label="设置关键点" className="flex h-[42px] w-10 shrink-0 items-center justify-center rounded-xs bg-[#606060]">
        <Glyph size={30}>
          <path d="M9 0h5v9h9v5h-9v8H9v-8H0V9h9z" fill={L} />
          <path d="M15 20l7-7m-2 2l2 2" stroke={T} strokeWidth="2" />
          <circle cx="14" cy="20" r="2.500" stroke={T} strokeWidth="2" fill="#606060" />
        </Glyph>
      </button>
      <div className="flex w-[65px] shrink-0 flex-col gap-[3px]">
        <button type="button" className={`h-5 ${key}`}>自动关键点</button>
        <button type="button" className={`h-5 ${key}`}>设置关键点</button>
      </div>
      <div className="flex w-[111px] shrink-0 flex-col gap-[5px]">
        <Dropdown label="关键点对象" value="选定对象" className="h-[18px] w-full" />
        <div className="flex">
          <button type="button" aria-label="切线" className="w-[25px]">
            <Glyph size={20}>
              <path d="M3 21Q9 12 7 5M21 21q-6-9-4-16" stroke={T} strokeWidth="2.400" />
              <path d="M1 5h5M18 5h5" stroke={L} strokeWidth="2.400" />
              <path d="M10 2h4v4h-4z" stroke={L} strokeWidth="1.500" />
              <path d="M24 18v6h-6z" fill="#eee" />
            </Glyph>
          </button>
          <button type="button" className={`flex h-5 w-[86px] items-center justify-center overflow-hidden ${key}`}>
            关键点过滤器...
          </button>
        </div>
      </div>
      <div className="flex w-6 shrink-0 flex-col gap-2 pt-0.5 pl-3">
        <Glyph size={16}><path d="M9 4L1 20h5l6-12z" fill={L} /></Glyph>
        <Glyph size={16}><rect x="2" y="2" width="20" height="20" stroke={T} strokeWidth="3" strokeDasharray="5 3" /></Glyph>
      </div>
    </div>
  );
}

function StatusBar() {
  return (
    <div className="flex h-14 shrink-0 overflow-hidden">
      <div className="mt-1 mr-1 h-12 w-1.5 shrink-0">
        <div className="h-[22px] border-y border-[#eee] bg-[#d4bcbc]" />
        <div className="mt-0.5 h-[22px] bg-white" />
      </div>
      <div className="mt-1 h-12 w-px shrink-0 bg-black" />
      <div className="grow pt-[9px] pl-[5px] text-white">
        <p className="leading-[18px]">选择了 1 个 对象</p>
        <p className="mt-[7px] leading-[18px]">单击并拖动以选择并移动对象</p>
      </div>
      <Coordinates />
      <div className="ml-[18px] shrink-0"><Playback /></div>
      <div className="ml-3"><KeyControls /></div>
    </div>
  );
}

/* ---------- taskbar ---------- */

const apps: [string, ReactNode][] = [
  ['资源管理器', (
    <>
      <path d="M3 4h8l2 3h17v24H3z" fill="#efd486" stroke="#b99848" />
      <path d="M6 2h7v5H6zM15 3h12v5H15z" fill="#fbf2cf" stroke="#c8a95a" />
      <path d="M7 32V20h20v12h-6v-6h-8v6z" fill="#a9d2ec" stroke="#5b93bb" />
    </>
  )],
  ['浏览器', (
    <>
      <path d="M17 17Q10 10 17 1q8 0 11 6-4 7-11 10z" fill="#a838d8" />
      <path d="M17 17q2-9 12-9 5 6 3 13-8 2-15-4z" fill="#e8343c" />
      <path d="M17 17q10 0 12 9-4 7-12 7-5-8 0-16z" fill="#f8c81c" />
      <path d="M17 17q3 9-3 16-7-1-10-7 4-8 13-9z" fill="#58c02c" />
      <path d="M17 17q-8 5-14 6-4-8 1-14 8 0 13 8z" fill="#12a88c" />
      <path d="M17 17Q8 14 6 7q4-5 10-6 1 8 1 16z" fill="#2c7cf0" />
      <circle cx="17" cy="17" r="3" fill="#fff" />
    </>
  )],
  ['WPS', (
    <>
      <rect x="3" y="2" width="28" height="30" rx="4" fill="#2f7fe6" />
      <path d="M9 10l4 13 4-9 4 9 4-13M13 10h9" stroke="#fff" strokeWidth="2.400" fill="none" />
    </>
  )],
  ['记事本', (
    <>
      <path d="M14 3l17 2-2 27-6-2z" fill="#eef3f6" stroke="#8a9aa6" />
      <path d="M13 3l15 1-6 26L3 26z" fill="#7fbccc" stroke="#4e8ba2" />
      <path d="M13 3l16 1" stroke="#667" strokeWidth="3" strokeDasharray="2 1" />
    </>
  )],
  ['头像', (
    <>
      <circle cx="17" cy="17" r="16.500" fill="#fff" />
      <path d="M5 15Q4 2 17 2t12 13l-3 4H8z" fill="#4a1212" />
      <path d="M9 13q8 0 14-4 3 3 2 9-2 7-8 7t-8-7z" fill="#fbd9c4" />
      <circle cx="13" cy="17" r="3" fill="none" stroke="#222" strokeWidth="1.300" />
      <circle cx="21" cy="17" r="3" fill="none" stroke="#222" strokeWidth="1.300" />
      <path d="M14 22h6" stroke="#c33" />
      <path d="M8 32q2-7 9-6 7-1 9 6z" fill="#e8eef4" />
    </>
  )],
  ['3ds Max', (
    <>
      <path d="M2 1h30v32H2z" fill="#dfeef0" />
      <path d="M11 6q10-3 11 2 0 4-6 5 8 1 6 7-3 5-12 2" stroke="#178f96" strokeWidth="4.500" fill="none" />
    </>
  )],
];

const tray: [string, ReactNode][] = [
  ['键盘', (
    <>
      <path d="M1 8h22v11H1z" fill="#ddd" stroke="#777" />
      <path d="M4 11h16M4 14h16M7 17h10" stroke="#555" strokeWidth="1.600" strokeDasharray="2 1" />
    </>
  )],
  ['助手', (
    <>
      <rect width="24" height="24" rx="4" fill="#e8762c" />
      <circle cx="12" cy="12" r="6" stroke="#fff" strokeWidth="4" strokeDasharray="4 1" />
      <circle cx="12" cy="12" r="3" fill="#fcd84a" />
    </>
  )],
  ['邮件', (
    <>
      <rect width="24" height="24" rx="3" fill="#c8252b" />
      <path d="M3 8h9v10H3zM3 13h9M7.500 5v13M15 20V6h5l-2 5q4 4-2 6" stroke="#fff" strokeWidth="1.600" />
    </>
  )],
  ['时钟', (
    <>
      <circle cx="12" cy="12" r="11" fill="#f2f2f2" />
      <circle cx="12" cy="12" r="8" stroke="#333" strokeWidth="2" strokeDasharray="3 2" />
      <path d="M12 6v6h6M7 9h4" stroke="#333" strokeWidth="2" />
    </>
  )],
  ['Autodesk', (
    <>
      <path d="M2 20L9 3h4L7 20z" fill="#2c9f9a" />
      <path d="M9 3h5l8 17h-6z" fill="#2358a8" />
    </>
  )],
  ['录制', <path d="M7 1h10l6 6v10l-6 6H7l-6-6V7z" fill="#c80f14" stroke="#3a0808" strokeWidth="2" />],
  ['花', (
    <>
      <circle cx="12" cy="12" r="7" stroke="#eca7ad" strokeWidth="7" strokeDasharray="6 1.400" />
      <circle cx="12" cy="12" r="3" fill="#c8545c" />
    </>
  )],
  ['USB', (
    <>
      <path d="M5 1h6v6h2v9q-4 5-8 0-3-2-2-9h2z" fill="#555" />
      <circle cx="16" cy="16" r="8" fill="#2f9c3c" />
      <path d="M12 16l3 4 5-8" stroke="#fff" strokeWidth="2.400" />
    </>
  )],
  ['网络', (
    <>
      <path d="M6 6h17v12H6z" fill="#5a6f88" stroke="#fff" strokeWidth="2" />
      <path d="M10 22h10M2 1v7h6V1M5 8v10" stroke="#fff" strokeWidth="2" />
    </>
  )],
  ['音量', (
    <>
      <path d="M1 8h5l7-7v22l-7-7H1z" fill="#fff" />
      <path d="M16 7q4 5 0 10M19 4q6 8 0 16" stroke="#fff" strokeWidth="2" />
    </>
  )],
];

function Taskbar() {
  return (
    <footer className="flex h-[39px] shrink-0 overflow-hidden border-t border-[#d5e2ef] bg-[#a5bfdb]">
      <div className="flex w-[150px] shrink-0 items-center">
        <button type="button" aria-label="词典" className="-ml-6 shrink-0">
          <svg width="33" height="34" viewBox="0 0 33 34" fill="none" aria-hidden="true">
            <rect width="33" height="34" rx="5" fill="#d8201f" />
            <path d="M15 10h13v13H15M22 10v13" stroke="#fff" strokeWidth="2" />
          </svg>
        </button>
        <button type="button" aria-label="无线" className="ml-[30px] shrink-0">
          <svg width="32" height="34" viewBox="0 0 32 34" fill="none" aria-hidden="true">
            <rect width="32" height="34" rx="5" fill="#16b80f" />
            <path d="M3 12V7q6-2 13-2t13 2v5M3 22v5q6 2 13 2t13-2v-5M3 12v10M29 12v10" stroke="#fff" strokeWidth="1.500" />
            <path d="M19 9q-6 8 0 16M14 11q-4 6 0 12" stroke="#fff" strokeWidth="3" />
            <path d="M23 10q-4 7 0 14" stroke="#fff" strokeWidth="1.500" />
          </svg>
        </button>
        <button type="button" aria-label="UC" className="ml-[30px] shrink-0">
          <svg width="32" height="34" viewBox="0 0 32 34" fill="none" aria-hidden="true">
            <rect width="32" height="34" rx="5" fill="#f5842a" />
            <path d="M5 8l4-5q7 0 6 6-2 4-3 6 5-5 9-1 8-3 6-9 5 12-5 14 4 7-3 12H8q-6-7 1-13 2-4 1-7z" fill="#fff" />
            <circle cx="16" cy="23" r="5" stroke="#f5842a" strokeWidth="2" />
            <circle cx="16" cy="23" r="1.500" fill="#f5842a" />
          </svg>
        </button>
      </div>
      <div className="flex gap-[3px]">
        {apps.map(([name, art], i) => (
          <button
            key={name}
            type="button"
            aria-label={name}
            className={`relative flex h-[38px] w-[59px] items-center justify-center rounded-sm border border-[#3f556e] bg-linear-to-br to-[#a4bbd6] shadow-[inset_1px_1px_0_#f0f6fc] ${
              i === 5 ? 'from-[#f4f9fd]' : 'from-[#d5e2f0]'
            }`}
          >
            {i === 0 && <span className="absolute inset-y-0 right-1 w-[5px] border-x border-[#5f7690]" />}
            <svg width="32" height="34" viewBox="0 0 34 34" fill="none" className={i === 0 ? 'mr-2' : ''} aria-hidden="true">
              {art}
            </svg>
            {i === 5 && (
              <span className="absolute right-4 bottom-0.5 [font-family:'Liberation_Sans',sans-serif] text-[8px] font-bold text-[#178f96]">MAX</span>
            )}
          </button>
        ))}
      </div>
      <div className="ml-auto flex w-[288px] shrink-0 items-center gap-[9px] bg-linear-to-r from-[#a5bfdb] via-[#7e94ad] via-10% to-[#7e94ad] pl-12">
        {tray.map(([name, art]) => (
          <button key={name} type="button" aria-label={name} className="shrink-0">
            <Glyph size={16}>{art}</Glyph>
          </button>
        ))}
      </div>
    </footer>
  );
}

export default function App() {
  return (
    <div className="relative flex h-screen flex-col overflow-hidden bg-[#444] [font-family:'Liberation_Mono','Noto_Sans_CJK_SC',monospace] text-xs">
      <header className="flex h-[22px] shrink-0 items-start justify-between border-t border-[#2e3f52] bg-linear-to-b from-[#93b1d0] to-[#b3cbe4]">
        <span className="-ml-[23px] [font-family:'Open_Sans',sans-serif] text-[13px] leading-[19px] text-[#15202c]">
          Autodesk 3ds Max 2018
        </span>
        <div className="h-1 w-[346px] border-b border-white bg-black" />
      </header>
      <MenuBar />
      <MainToolbar />
      <Ribbon />
      <div className="flex min-h-0 grow pt-[5px]">
        <main className="mr-[5px] grid min-w-0 grow grid-cols-[738fr_833fr] grid-rows-[386fr_384fr] gap-x-[5px] gap-y-[5px]">
          <TopView />
          <FrontView />
          <LeftView />
          <PerspectiveView />
        </main>
        <CommandPanel />
      </div>
      <Timeline />
      <div className="flex h-[35px] shrink-0 items-center pl-2">
        <Bar items={lowerBar} divider="w-2" />
      </div>
      <StatusBar />
      <Taskbar />
      <AlignDialog />
    </div>
  );
}
